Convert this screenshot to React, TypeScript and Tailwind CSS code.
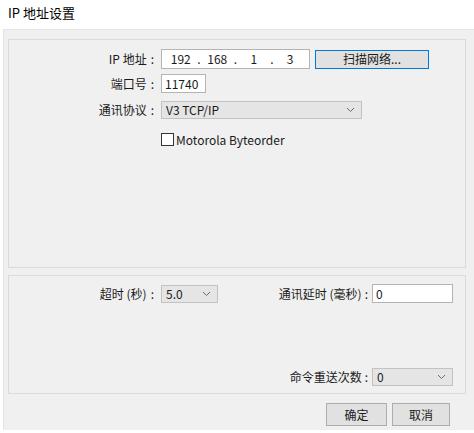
import React from 'react';

const font = "font-['Noto_Sans_CJK_SC','Noto_Sans',sans-serif]";

const Chevron = () => (
    <svg width="9" height="6" viewBox="0 0 9 6" className="shrink-0">
        <path d="M1 1 L4.5 4.5 L8 1" fill="none" stroke="#6b6b6b" strokeWidth="1" />
    </svg>
);

const Select = ({ value, className }: { value: string; className: string }) => (
    <div className={`flex items-center justify-between bg-[#e5e5e5] border border-[#c2c2c2] pl-[4px] pr-[6px] ${className}`}>
        <span className="leading-none">{value}</span>
        <Chevron />
    </div>
);

// label text followed by a colon, spaced like the dialog's static labels
const Label = ({ text, className = '', tight = false }: { text: string; className?: string; tight?: boolean }) => (
    <div className={`flex justify-end items-center whitespace-nowrap leading-none ${className}`}>
        <span>{text}</span>
        <span className={tight ? 'ml-[3px] mr-[4px]' : 'ml-[4px] mr-[7px]'}>:</span>
    </div>
);

const IpField = ({ parts }: { parts: string[] }) => (
    <div className="flex items-center w-[149px] h-[20px] bg-white border border-[#b4b4b4] px-[5px]">
        {parts.map((p, i) => (
            <React.Fragment key={i}>
                {i > 0 && <span className="w-[9px] text-center leading-none">.</span>}
                <span className="w-[28px] text-center leading-none">{p}</span>
            </React.Fragment>
        ))}
    </div>
);

const App: React.FC = () => {
    return (
        <div className={`w-[474px] h-[433px] bg-white overflow-hidden text-[12px] text-[#1a1a1a] ${font}`}>
            <div className="h-[29px] pl-[8px] pt-[6px] text-[13px] leading-none text-black">IP 地址设置</div>
            <div className="ml-[3px] h-[401px] bg-[#f0f0f0] border-l border-t border-[#e4e4e4] pl-[4px] pr-[8px] pt-[9px]">
                {/* connection settings */}
                <div className="h-[229px] border border-[#dadada] pt-[9px]">
                    <div className="flex items-center h-[20px]">
                        <Label text="IP 地址" className="w-[152px]" />
                        <IpField parts={['192', '168', '1', '3']} />
                        <button className="ml-[5px] w-[114px] h-[19px] bg-[#e1e1e1] border border-[#0078d7] leading-none">扫描网络...</button>
                    </div>
                    <div className="flex items-center h-[19px] mt-[5px]">
                        <Label text="端口号" className="w-[152px]" />
                        <div className="w-[45px] h-[19px] bg-white border border-[#b4b4b4] pl-[3px] flex items-center leading-none">11740</div>
                    </div>
                    <div className="flex items-center h-[18px] mt-[8px]">
                        <Label text="通讯协议" className="w-[152px]" />
                        <Select value="V3 TCP/IP" className="w-[201px] h-[18px]" />
                    </div>
                    <div className="flex items-center h-[13px] mt-[14px] pl-[152px]">
                        <div className="w-[13px] h-[13px] bg-white border border-[#333333]" />
                        <span className="ml-[2px] leading-none">Motorola Byteorder</span>
                    </div>
                </div>
                {/* timing settings */}
                <div className="h-[119px] mt-[7px] border border-[#dadada] pt-[8px] pr-[12px]">
                    <div className="flex items-center h-[19px]">
                        <Label text="超时 (秒)" className="w-[152px]" />
                        <Select value="5.0" className="w-[57px] h-[18px]" />
                        <Label text="通讯延时 (毫秒)" className="ml-auto" tight />
                        <div className="w-[81px] h-[19px] bg-white border border-[#b4b4b4] pl-[3px] flex items-center leading-none">0</div>
                    </div>
                    <div className="flex items-center justify-end h-[18px] mt-[65px]">
                        <Label text="命令重送次数" tight />
                        <Select value="0" className="w-[81px] h-[18px]" />
                    </div>
                </div>
                <div className="flex justify-end gap-[5px] mt-[9px] pr-[16px]">
                    <button className="w-[61px] h-[23px] bg-[#e1e1e1] border border-[#adadad] leading-none">确定</button>
                    <button className="w-[58px] h-[23px] bg-[#e1e1e1] border border-[#adadad] leading-none">取消</button>
                </div>
            </div>
        </div>
    );
};

export default App;
